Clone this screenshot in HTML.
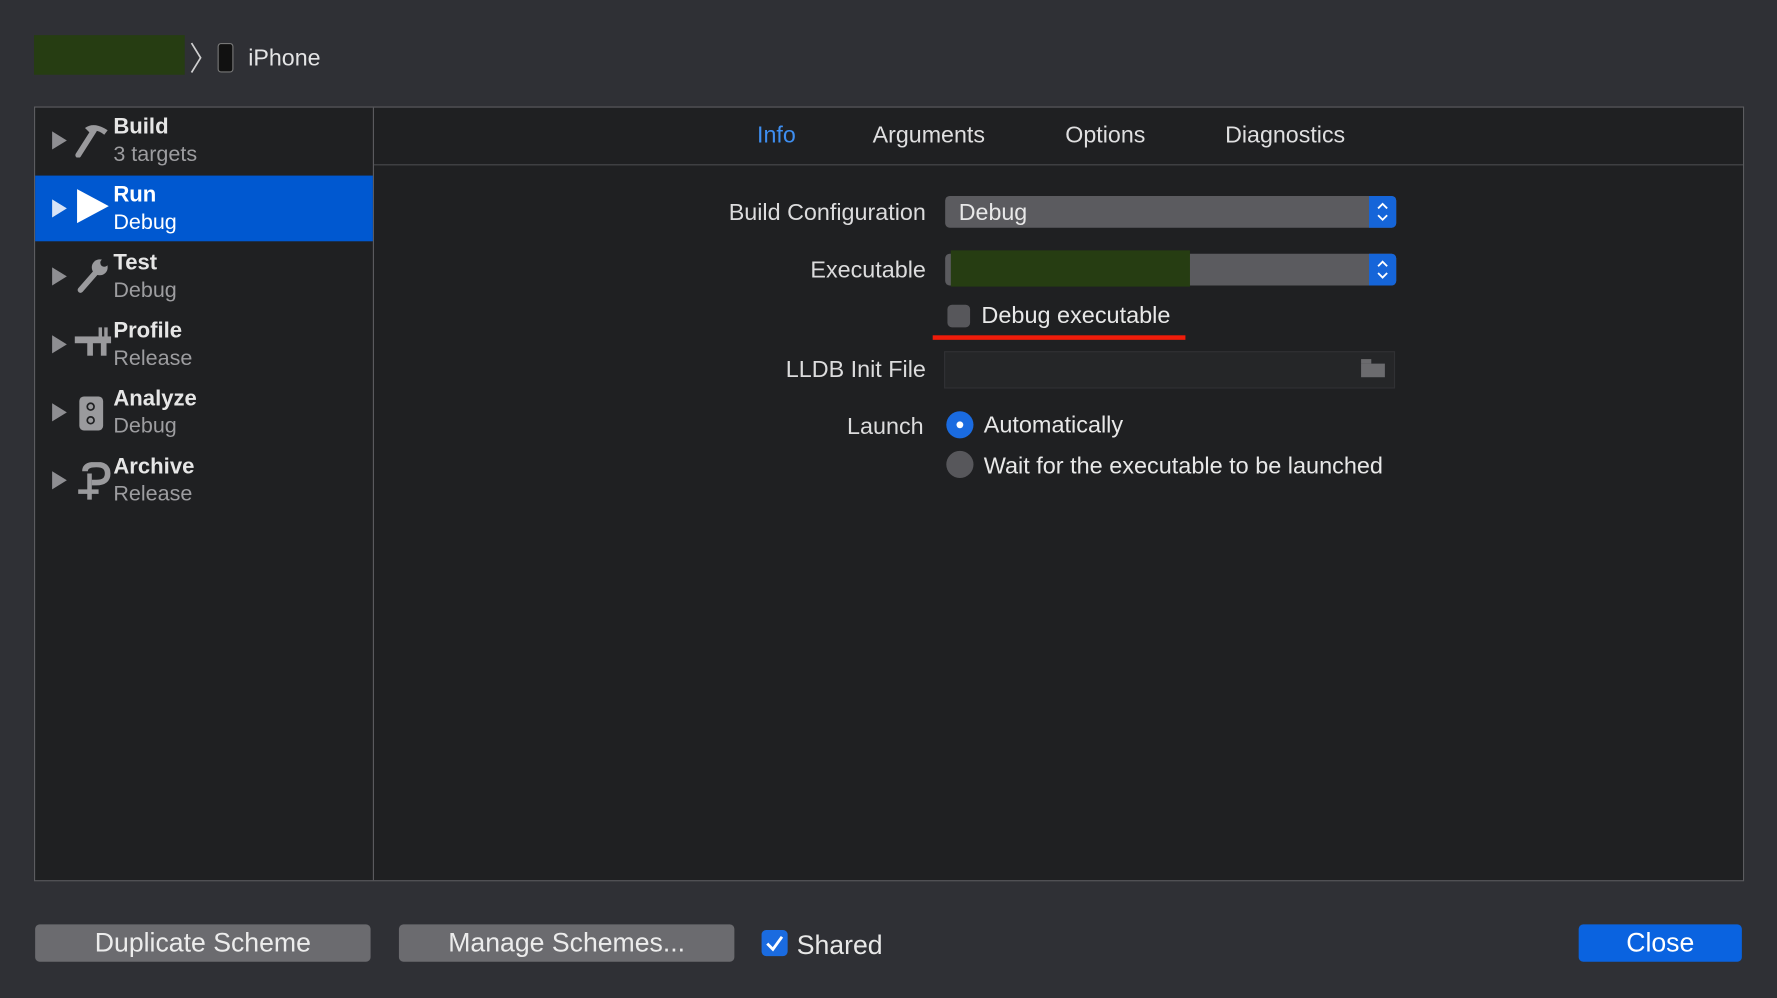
<!DOCTYPE html>
<html><head><style>
html,body{margin:0;padding:0;background:#303136;overflow:hidden}
#w{width:1568px;height:881px;position:relative;transform-origin:0 0;transform:scale(1.13329,1.13280);background:#2f3035;font-family:"Liberation Sans",sans-serif;color:#dfdfe0}
.a{position:absolute}
.lbl{position:absolute;font-size:20.6px;color:#dcdcdd;text-align:right;width:300px}
.t{font-size:20.5px;position:absolute}
.row{position:absolute;left:31px;width:298px;height:60px}
.row .n{position:absolute;left:69px;top:6px;font-weight:bold;font-size:19.5px;color:#e6e6e6}
.row .s{position:absolute;left:69px;top:31px;font-size:19px;color:#9d9da0}
.row .tri{position:absolute;left:15px;top:21px;width:0;height:0;border-left:13px solid #8e8e92;border-top:8px solid transparent;border-bottom:8px solid transparent}
.btn{position:absolute;top:816px;height:33px;background:#6b6b6f;border-radius:4px;font-size:23.5px;color:#ececec;text-align:center;line-height:33px}
</style></head><body><div id="w">
<div class="a" style="left:30px;top:31px;width:133px;height:35px;background:#263d12"></div>
<svg class="a" style="left:166px;top:36px" width="14" height="30"><path d="M3 2 L11 15 L3 28" stroke="#cfcfd0" stroke-width="1.5" fill="none"/></svg>
<div class="a" style="left:192px;top:38px;width:12px;height:24px;border:1px solid #777;border-radius:3px;background:#111"></div>
<div class="t" style="left:219px;top:40px;font-size:20.5px;color:#e4e4e5">iPhone</div>

<div class="a" style="left:30px;top:94px;width:1507px;height:682px;border:1px solid #5c5c60;background:#1f2022"></div>
<div class="a" style="left:329px;top:95px;width:1px;height:682px;background:#5c5c60"></div>
<div class="a" style="left:330px;top:145px;width:1208px;height:1px;background:#4a4a4e"></div>

<div class="t" style="left:668px;top:108px;color:#3e8ef0">Info</div>
<div class="t" style="left:770px;top:108px">Arguments</div>
<div class="t" style="left:940px;top:108px">Options</div>
<div class="t" style="left:1081px;top:108px">Diagnostics</div>

<div class="row" style="top:95px"><div class="tri"></div>
<svg class="a" style="left:34px;top:12px" width="32" height="32"><path d="M4 30 L18 8" stroke="#9a9a9d" stroke-width="5" stroke-linecap="round"/><path d="M10 6 Q18 0 30 8 L27 12 Q20 6 14 10Z" fill="#9a9a9d"/></svg>
<div class="n">Build</div><div class="s">3 targets</div></div>
<div class="row" style="top:155px;height:58px;background:#0058d0"><div class="tri" style="border-left-color:#d7e3f7"></div>
<svg class="a" style="left:36px;top:11px" width="30" height="32"><path d="M1 1 L29 16 L1 31Z" fill="#fff"/></svg>
<div class="n" style="color:#fff">Run</div><div class="s" style="color:#fff">Debug</div></div>
<div class="row" style="top:215px"><div class="tri"></div>
<svg class="a" style="left:36px;top:11px" width="30" height="34"><path d="M4 30 L18 14" stroke="#9a9a9d" stroke-width="5" stroke-linecap="round"/><circle cx="21" cy="10" r="7" fill="#9a9a9d"/><circle cx="25" cy="6" r="3.5" fill="#1f2022"/></svg>
<div class="n">Test</div><div class="s">Debug</div></div>
<div class="row" style="top:275px"><div class="tri"></div>
<svg class="a" style="left:34px;top:12px" width="34" height="32"><rect x="1" y="10" width="32" height="6" fill="#9a9a9d"/><rect x="12" y="12" width="5" height="15" fill="#9a9a9d"/><rect x="24" y="12" width="5" height="15" fill="#9a9a9d"/><rect x="22" y="2" width="3" height="9" fill="#9a9a9d"/><rect x="27" y="2" width="3" height="9" fill="#9a9a9d"/></svg>
<div class="n">Profile</div><div class="s">Release</div></div>
<div class="row" style="top:335px"><div class="tri"></div>
<svg class="a" style="left:38px;top:12px" width="24" height="34"><rect x="1" y="3" width="21" height="30" rx="4" fill="#9a9a9d"/><circle cx="11" cy="12" r="3" stroke="#1f2022" stroke-width="1.5" fill="none"/><circle cx="11" cy="24" r="3" stroke="#1f2022" stroke-width="1.5" fill="none"/></svg>
<div class="n">Analyze</div><div class="s">Debug</div></div>
<div class="row" style="top:395px"><div class="tri"></div>
<svg class="a" style="left:36px;top:13px" width="32" height="34"><path d="M8 8 Q8 2 18 2 Q28 2 28 10 Q28 18 18 18 L14 18" stroke="#9a9a9d" stroke-width="5" fill="none"/><path d="M12 10 L12 33 M2 26 L20 26" stroke="#9a9a9d" stroke-width="4"/></svg>
<div class="n">Archive</div><div class="s">Release</div></div>

<div class="lbl" style="left:517px;top:176px">Build Configuration</div>
<div class="a" style="left:834px;top:173px;width:398px;height:28px;background:#5b5b5f;border-radius:4px"></div>
<div class="t" style="left:846px;top:176px;color:#e8e8e8">Debug</div>
<div class="a" style="left:1208px;top:173px;width:24px;height:28px;background:#1565d9;border-radius:0 4px 4px 0"></div>
<svg class="a" style="left:1212px;top:176px" width="16" height="22"><path d="M4 8 L8 4 L12 8 M4 14 L8 18 L12 14" stroke="#fff" stroke-width="1.6" fill="none"/></svg>

<div class="lbl" style="left:517px;top:227px">Executable</div>
<div class="a" style="left:834px;top:224px;width:398px;height:28px;background:#5b5b5f;border-radius:4px"></div>
<div class="a" style="left:839px;top:221px;width:211px;height:32px;background:#263d12"></div>
<div class="a" style="left:1208px;top:224px;width:24px;height:28px;background:#1565d9;border-radius:0 4px 4px 0"></div>
<svg class="a" style="left:1212px;top:227px" width="16" height="22"><path d="M4 8 L8 4 L12 8 M4 14 L8 18 L12 14" stroke="#fff" stroke-width="1.6" fill="none"/></svg>

<div class="a" style="left:836px;top:269px;width:20px;height:20px;background:#57575b;border-radius:4px"></div>
<div class="t" style="left:866px;top:267px;color:#e8e8e8;font-size:20.7px">Debug executable</div>
<div class="a" style="left:823px;top:296px;width:223px;height:4px;background:#f01c0a"></div>

<div class="lbl" style="left:517px;top:315px">LLDB Init File</div>
<div class="a" style="left:833px;top:310px;width:396px;height:31px;background:#252628;border:1px solid #303134"></div>
<svg class="a" style="left:1200px;top:316px" width="24" height="20"><rect x="1" y="1" width="9" height="4" fill="#6b6b6e"/><rect x="1" y="5" width="21" height="12" fill="#6b6b6e"/></svg>

<div class="lbl" style="left:515px;top:365px">Launch</div>
<div class="a" style="left:835px;top:363px;width:24px;height:24px;border-radius:50%;background:#1a6be0"></div>
<div class="a" style="left:844px;top:372px;width:6px;height:6px;border-radius:50%;background:#fff"></div>
<div class="t" style="left:868px;top:364px;color:#e8e8e8;font-size:20.7px">Automatically</div>
<div class="a" style="left:835px;top:398px;width:24px;height:24px;border-radius:50%;background:#57575b"></div>
<div class="t" style="left:868px;top:400px;color:#e8e8e8;font-size:20.7px">Wait for the executable to be launched</div>

<div class="btn" style="left:31px;width:296px">Duplicate Scheme</div>
<div class="btn" style="left:352px;width:296px">Manage Schemes...</div>
<div class="a" style="left:672px;top:821px;width:23px;height:23px;background:#1a6be0;border-radius:4px"></div>
<svg class="a" style="left:672px;top:821px" width="23" height="23"><path d="M5 12 L10 17 L18 6" stroke="#fff" stroke-width="2.5" fill="none"/></svg>
<div class="t" style="left:703px;top:821px;font-size:23.5px;color:#e8e8e8">Shared</div>
<div class="btn" style="left:1393px;width:144px;background:#0a63e0;color:#fff">Close</div>
</div></body></html>
